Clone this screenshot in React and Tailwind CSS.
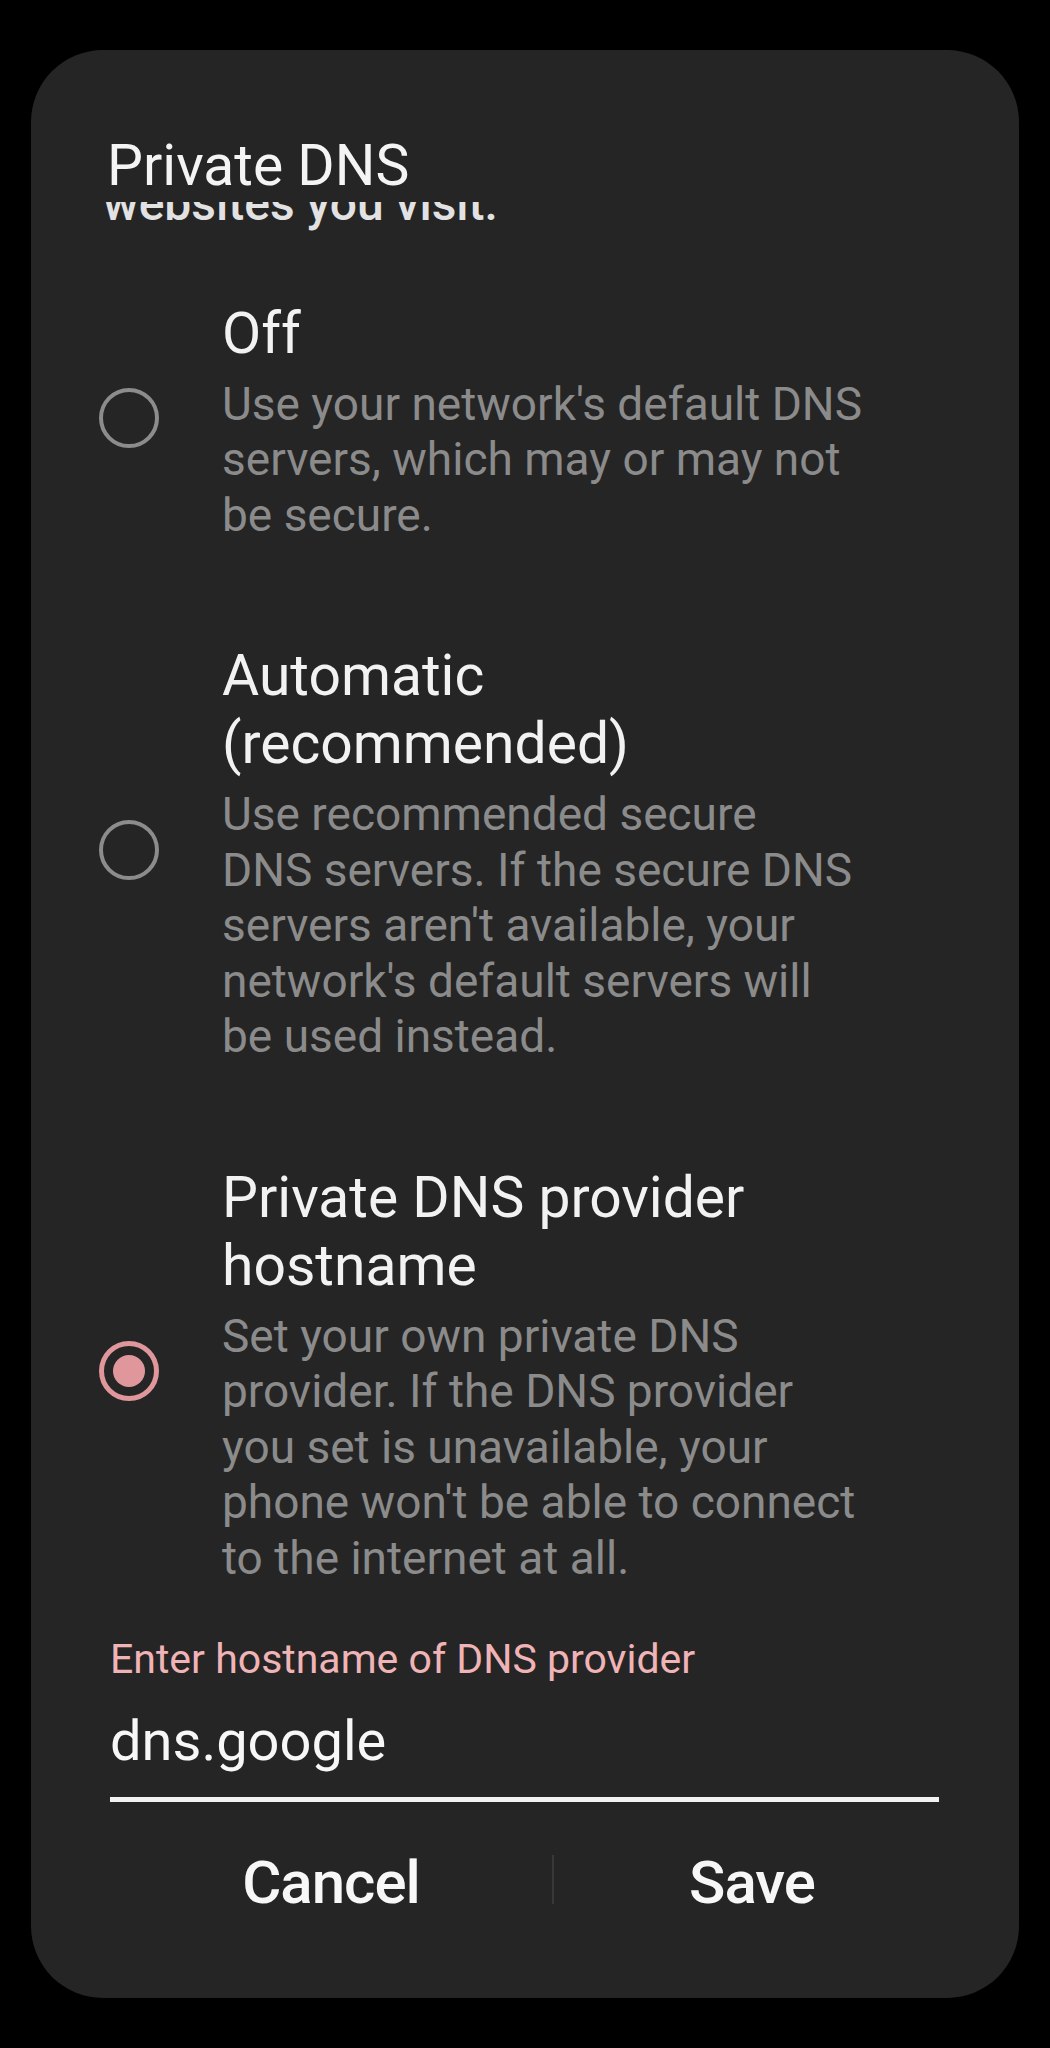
const options = [
  {
    title: ["Off"],
    desc: ["Use your network's default DNS", "servers, which may or may not", "be secure."],
    selected: false,
  },
  {
    title: ["Automatic", "(recommended)"],
    desc: [
      "Use recommended secure",
      "DNS servers. If the secure DNS",
      "servers aren't available, your",
      "network's default servers will",
      "be used instead.",
    ],
    selected: false,
  },
  {
    title: ["Private DNS provider", "hostname"],
    desc: [
      "Set your own private DNS",
      "provider. If the DNS provider",
      "you set is unavailable, your",
      "phone won't be able to connect",
      "to the internet at all.",
    ],
    selected: true,
  },
];

function Radio({ selected }) {
  if (selected) {
    return (
      <div className="mb-[7px] flex h-[60px] w-[60px] shrink-0 items-center justify-center rounded-full border-[5px] border-[#e0979b]">
        <div className="h-[32px] w-[32px] rounded-full bg-[#e0979b]" />
      </div>
    );
  }
  return <div className="mb-[7px] h-[60px] w-[60px] shrink-0 rounded-full border-[4px] border-[#8c8c8c]" />;
}

function Option({ opt, first }) {
  return (
    <div className={`flex items-center pl-[68px] ${first ? "mt-[68px]" : "mt-[99px]"}`}>
      <Radio selected={opt.selected} />
      <div className="ml-[63px] flex flex-col">
        <div className="text-[57px] leading-[68px] text-[#f2f2f2]">
          {opt.title.map((t) => (
            <div key={t} className="whitespace-nowrap">
              {t}
            </div>
          ))}
        </div>
        <div className="mt-[9px] text-[46px] leading-[55.5px] text-[#8b8b8b]">
          {opt.desc.map((t) => (
            <div key={t} className="whitespace-nowrap">
              {t}
            </div>
          ))}
        </div>
      </div>
    </div>
  );
}

export default function App() {
  return (
    <div className="min-h-[2048px] w-[1050px] bg-black pl-[31px] pt-[50px] font-['Roboto','Liberation_Sans',sans-serif]">
      <div className="flex h-[1948px] w-[988px] flex-col overflow-hidden rounded-[72px] bg-[#252525] pt-[82px]">
        <div className="pl-[76px] text-[57px] leading-[68px] text-[#f4f4f4]">Private DNS</div>
        <div className="mt-[2px] overflow-hidden">
          <div className="-mt-[26px]">
            <div className="pl-[72px] text-[48px] font-medium leading-[55.5px] text-[#e2e2e2]">websites you visit.</div>
            {options.map((o, i) => (
              <Option key={i} opt={o} first={i === 0} />
            ))}
          </div>
        </div>
        <div className="mt-[49px] flex flex-col pl-[79px]">
          <div className="text-[41px] leading-[48px] text-[#f0b4b7]">Enter hostname of DNS provider</div>
          <div className="mt-[25px] text-[56px] leading-[66px] text-[#f7f7f7]">dns.google</div>
          <div className="mt-[23px] h-[5px] w-[829px] bg-[#f2f2f2]" />
          <div className="mt-[46px] flex">
            <div className="w-[442px] text-center text-[60px] font-medium leading-[70px] tracking-[-1px] text-[#f7f7f7]">
              Cancel
            </div>
            <div className="mt-[7px] h-[49px] w-[2px] bg-[#383838]" />
            <div className="w-[396px] text-center text-[60px] font-medium leading-[70px] tracking-[-1px] text-[#f7f7f7]">
              Save
            </div>
          </div>
        </div>
      </div>
    </div>
  );
}
